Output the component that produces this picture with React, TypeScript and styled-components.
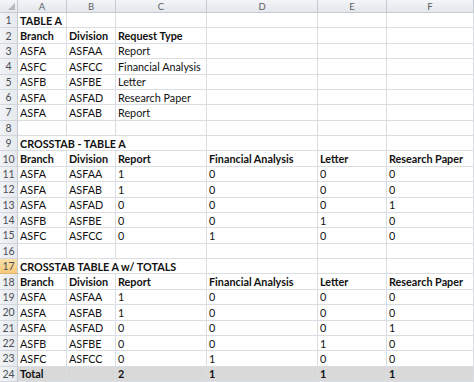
import React from 'react'
import styled, { createGlobalStyle } from 'styled-components'

const GlobalStyle = createGlobalStyle`
  html, body {
    margin: 0;
    padding: 0;
    background: #ffffff;
  }
  body {
    font-family: Lato, "Liberation Sans", Arial, sans-serif;
    overflow: hidden;
  }
`

const Sheet = styled.div`
  display: grid;
  grid-template-columns: 18px 49px 49px 91px 111px 69px 1fr;
  grid-template-rows: 13px repeat(24, 15.375px);
  width: 474px;
  height: 382px;
  overflow: hidden;
  background: #ffffff;
`

const Corner = styled.div`
  position: relative;
  background: linear-gradient(#f3f5f8, #e4e7eb);
  border-right: 1px solid #c6cbd2;
  border-bottom: 1px solid #c6cbd2;
  box-sizing: border-box;
`

const CornerMark = styled.span`
  position: absolute;
  right: 2px;
  bottom: 2px;
  width: 0;
  height: 0;
  border-left: 7px solid transparent;
  border-bottom: 7px solid #b4b9c0;
`

const ColHead = styled.div`
  display: flex;
  align-items: center;
  justify-content: center;
  background: linear-gradient(#f3f5f8, #e4e7eb);
  border-right: 1px solid #c6cbd2;
  border-bottom: 1px solid #c6cbd2;
  box-sizing: border-box;
  font-size: 9.5px;
  color: #5b5f66;
`

const RowHead = styled.div<{ $active?: boolean }>`
  display: flex;
  align-items: center;
  justify-content: center;
  background: ${(p) => (p.$active ? 'linear-gradient(#fbe1a8, #f6c97c)' : 'linear-gradient(90deg, #f1f3f6, #e6e9ed)')};
  border-right: 1px solid #c6cbd2;
  border-bottom: 1px solid ${(p) => (p.$active ? '#e0b56a' : '#d3d7dd')};
  box-sizing: border-box;
  font-size: 10.5px;
  color: #4a4e55;
`

const Cell = styled.div<{ $bold?: boolean; $total?: boolean; $span?: number }>`
  display: flex;
  align-items: center;
  padding-left: 2px;
  grid-column: ${(p) => (p.$span ? `span ${p.$span}` : 'auto')};
  background: ${(p) => (p.$total ? '#d9d9d9' : '#ffffff')};
  border-right: 1px solid #dadde2;
  border-bottom: 1px solid #dadde2;
  box-sizing: border-box;
  font-size: 10.8px;
  font-weight: ${(p) => (p.$bold ? 700 : 400)};
  color: #111111;
  white-space: nowrap;
  overflow: visible;
`

type Row = { title?: string; cells?: string[]; bold?: boolean; total?: boolean }

const crosstab = [
  ['ASFA', 'ASFAA', '1', '0', '0', '0'],
  ['ASFA', 'ASFAB', '1', '0', '0', '0'],
  ['ASFA', 'ASFAD', '0', '0', '0', '1'],
  ['ASFB', 'ASFBE', '0', '0', '1', '0'],
  ['ASFC', 'ASFCC', '0', '1', '0', '0'],
]

const crossHead = ['Branch', 'Division', 'Report', 'Financial Analysis', 'Letter', 'Research Paper']

const rows: Row[] = [
  { cells: ['TABLE A'], bold: true },
  { cells: ['Branch', 'Division', 'Request Type'], bold: true },
  { cells: ['ASFA', 'ASFAA', 'Report'] },
  { cells: ['ASFC', 'ASFCC', 'Financial Analysis'] },
  { cells: ['ASFB', 'ASFBE', 'Letter'] },
  { cells: ['ASFA', 'ASFAD', 'Research Paper'] },
  { cells: ['ASFA', 'ASFAB', 'Report'] },
  {},
  { title: 'CROSSTAB - TABLE A' },
  { cells: crossHead, bold: true },
  ...crosstab.map((c) => ({ cells: c })),
  {},
  { title: 'CROSSTAB TABLE A w/ TOTALS' },
  { cells: crossHead, bold: true },
  ...crosstab.map((c) => ({ cells: c })),
  { cells: ['Total', '', '2', '1', '1', '1'], bold: true, total: true },
]

const columns = ['A', 'B', 'C', 'D', 'E', 'F']

export default function App() {
  return (
    <>
      <GlobalStyle />
      <Sheet>
        <Corner>
          <CornerMark />
        </Corner>
        {columns.map((c) => (
          <ColHead key={c}>{c}</ColHead>
        ))}
        {rows.map((row, i) => {
          const n = i + 1
          const out = [
            <RowHead key={`h${n}`} $active={n === 17}>
              {n}
            </RowHead>,
          ]
          if (row.title) {
            out.push(
              <Cell key={`t${n}`} $bold $span={3}>
                {row.title}
              </Cell>
            )
            for (let c = 3; c < 6; c++) out.push(<Cell key={`${n}-${c}`} />)
          } else {
            for (let c = 0; c < 6; c++) {
              out.push(
                <Cell key={`${n}-${c}`} $bold={row.bold} $total={row.total}>
                  {row.cells?.[c] ?? ''}
                </Cell>
              )
            }
          }
          return out
        })}
      </Sheet>
    </>
  )
}
